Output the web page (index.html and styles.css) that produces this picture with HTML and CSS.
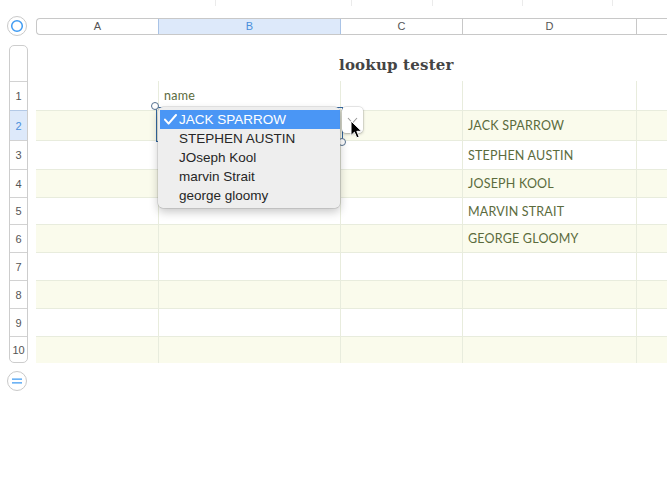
FILE: index.html
```html
<!DOCTYPE html>
<html>
<head>
<meta charset="utf-8">
<link rel="stylesheet" href="styles.css">
</head>
<body>
<div class="page">
  <div class="ghost">
    <span class="g g1"></span><span class="g g2"></span><span class="g g3"></span><span class="g g4"></span><span class="g g5"></span>
  </div>

  <div class="colbar">
    <div class="corner">
      <div class="roundbtn">
        <svg width="20" height="20" viewBox="0 0 20 20"><circle cx="10" cy="10" r="5.3" fill="none" stroke="#3f9bf2" stroke-width="1.5"/></svg>
      </div>
    </div>
    <div class="colheads">
      <div class="ch">A</div>
      <div class="ch sel">B</div>
      <div class="ch">C</div>
      <div class="ch">D</div>
      <div class="ch last"></div>
    </div>
  </div>

  <div class="sheet">
    <div class="gutter">
      <div class="rowheads">
        <div class="rh rh-title"></div>
        <div class="rh h29">1</div>
        <div class="rh h30 sel">2</div>
        <div class="rh h29">3</div>
        <div class="rh h28">4</div>
        <div class="rh h27">5</div>
        <div class="rh h28">6</div>
        <div class="rh h28">7</div>
        <div class="rh h28">8</div>
        <div class="rh h28">9</div>
        <div class="rh h26">10</div>
      </div>
      <div class="roundbtn bottom">
        <svg width="20" height="20" viewBox="0 0 20 20"><path d="M5 8.2h10M5 11.8h10" stroke="#3f9bf2" stroke-width="1.3" fill="none"/></svg>
      </div>
    </div>

    <div class="table">
      <div class="title-row"><span class="title">lookup tester</span></div>
      <div class="row h29 first">
        <div class="c"></div><div class="c"><span class="name">name</span></div><div class="c"></div><div class="c"></div><div class="c e"></div>
      </div>
      <div class="row h30 band">
        <div class="c"></div><div class="c"></div><div class="c"></div><div class="c val">JACK SPARROW</div><div class="c e"></div>
      </div>
      <div class="row h29">
        <div class="c"></div><div class="c"></div><div class="c"></div><div class="c val">STEPHEN AUSTIN</div><div class="c e"></div>
      </div>
      <div class="row h28 band">
        <div class="c"></div><div class="c"></div><div class="c"></div><div class="c val">JOSEPH KOOL</div><div class="c e"></div>
      </div>
      <div class="row h27">
        <div class="c"></div><div class="c"></div><div class="c"></div><div class="c val">MARVIN STRAIT</div><div class="c e"></div>
      </div>
      <div class="row h28 band">
        <div class="c"></div><div class="c"></div><div class="c"></div><div class="c val">GEORGE GLOOMY</div><div class="c e"></div>
      </div>
      <div class="row h28">
        <div class="c"></div><div class="c"></div><div class="c"></div><div class="c"></div><div class="c e"></div>
      </div>
      <div class="row h28 band">
        <div class="c"></div><div class="c"></div><div class="c"></div><div class="c"></div><div class="c e"></div>
      </div>
      <div class="row h28">
        <div class="c"></div><div class="c"></div><div class="c"></div><div class="c"></div><div class="c e"></div>
      </div>
      <div class="row h27 band">
        <div class="c"></div><div class="c"></div><div class="c"></div><div class="c"></div><div class="c e"></div>
      </div>
    </div>
  </div>

  <!-- overlays: selection, popup menu, popup button, cursor -->
  <div class="selbox"></div>
  <span class="handle h-tl"></span>
  <span class="handle h-br"></span>

  <div class="menu">
    <div class="item on">
      <svg class="check" width="13" height="11" viewBox="0 0 13 11"><path d="M1 5.6l3.6 4L12 1" fill="none" stroke="#fff" stroke-width="2" stroke-linecap="round" stroke-linejoin="round"/></svg>JACK SPARROW</div>
    <div class="item">STEPHEN AUSTIN</div>
    <div class="item">JOseph Kool</div>
    <div class="item">marvin Strait</div>
    <div class="item">george gloomy</div>
  </div>

  <div class="popbtn">
    <svg width="21" height="26" viewBox="0 0 21 26"><path d="M6 11l4.5 5 4.5-5" fill="none" stroke="#9a9a9a" stroke-width="1.1"/></svg>
  </div>

  <svg class="cursor" width="14" height="20" viewBox="0 0 14 20">
    <path d="M1 1v14.5l3.4-3.3 2.4 5.6 2.4-1-2.4-5.5h4.8z" fill="#000" stroke="#fff" stroke-width="1" stroke-linejoin="round"/>
  </svg>
</div>
</body>
</html>
```

FILE: styles.css
```css
* { box-sizing: border-box; }
html, body { margin: 0; padding: 0; background: #fff; }
body { font-family: "Liberation Sans", Arial, sans-serif; }

.page { position: relative; width: 667px; height: 500px; overflow: hidden; }

/* faint lines from a table above */
.ghost { height: 6px; position: relative; display: flex; padding-left: 215px; }
.g { display: block; height: 6px; border-left: 1px solid #ebebeb; }
.g1 { width: 136px; }
.g2 { width: 81px; }
.g3 { width: 90px; }
.g4 { width: 90px; }
.g5 { width: 10px; }

/* column header bar */
.colbar { display: flex; margin-top: 12px; height: 17px; }
.corner { width: 36px; position: relative; }
.roundbtn {
  width: 20px; height: 20px; border-radius: 50%;
  border: 1px solid #c9c9c9; background: #fff;
  display: flex; align-items: center; justify-content: center;
}
.corner .roundbtn { margin-top: -2px; margin-left: 7px; }
.roundbtn svg { display: block; flex: none; }

.colheads {
  flex: 1; display: grid;
  grid-template-columns: 122px 182px 122px 174px 1fr;
  border: 1px solid #c8c8c8; border-right: none;
  border-radius: 4px 0 0 4px; overflow: hidden;
}
.ch {
  font-size: 11px; color: #555; text-align: center; line-height: 15px;
  border-right: 1px solid #c8c8c8;
}
.ch.sel { background: #dde9fa; color: #4a8fdc; border-right-color: #a9c3e6; border-left: 1px solid #a9c3e6; margin-left: -1px; }
.ch.last { border-right: none; }

/* sheet */
.sheet { display: flex; margin-top: 10px; }
.gutter { width: 36px; padding-left: 9px; }
.rowheads {
  width: 19px; border: 1px solid #cdcdcd; border-radius: 5px;
  overflow: hidden;
}
.rh {
  font-size: 11px; color: #555; text-align: center;
  display: flex; align-items: center; justify-content: center;
  border-top: 1px solid #d2d2d2;
}
.rh-title { height: 35px; border-top: none; }
.rh.sel { background: #dde9fa; color: #4a8fdc; border-top-color: #b3c9e6; }
.roundbtn.bottom { margin-top: 8px; margin-left: -2px; }

.h26 { height: 26px; }
.h27 { height: 27px; }
.h28 { height: 28px; }
.h29 { height: 29px; }
.h30 { height: 30px; }

.table { width: 631px; }
.title-row { height: 36px; position: relative; }
.title {
  position: absolute; left: 303px; top: 11px;
  font-family: "DejaVu Serif", "Liberation Serif", serif;
  font-weight: bold; font-size: 15px; color: #444; letter-spacing: 0.2px;
}

.row {
  display: grid; grid-template-columns: 123px 182px 122px 174px 1fr;
  border-top: 1px solid #e8ecdd;
}
.row.first { border-top: none; }
.row.band { background: #fafbec; }
.c { border-right: 1px solid #e8ecdd; padding-left: 5px; display: flex; align-items: center; }
.c.e { border-right: none; }
.name { font-family: "Lato", sans-serif; font-size: 12.5px; color: #5b6b3d; letter-spacing: 0.3px; }
.val { font-family: "Lato", sans-serif; font-size: 12.5px; color: #5b6b3d; letter-spacing: 0.2px; }

/* overlays */
.selbox {
  position: absolute; left: 156px; top: 107px; width: 187px; height: 35px;
  border: 1.5px solid #33679f;
}
.handle {
  position: absolute; width: 8px; height: 8px; border-radius: 50%;
  background: #fff; border: 1.2px solid #56718f;
}
.h-tl { left: 151px; top: 102px; }
.h-br { left: 338px; top: 138px; }

.menu {
  position: absolute; left: 158px; top: 107px; width: 182px; height: 101px;
  background: #eeeeee; border-radius: 5px;
  box-shadow: 0 0 0 0.5px rgba(0,0,0,0.18), 0 4px 10px rgba(0,0,0,0.22);
  padding-top: 3px;
}
.item {
  position: relative; height: 19px; line-height: 19px;
  padding-left: 21px; font-size: 13.5px; color: #262626;
}
.item.on { background: #4a96f5; color: #fff; margin-left: 2px; padding-left: 19px; }
.check { position: absolute; left: 4px; top: 4px; display: block; }

.popbtn {
  position: absolute; left: 342px; top: 107px; width: 21px; height: 26px;
  background: #fff; border-radius: 4px;
  box-shadow: 0 0 0 0.5px rgba(0,0,0,0.15), 0 1px 3px rgba(0,0,0,0.25);
}
.popbtn svg { display: block; }
.cursor { position: absolute; left: 350px; top: 120px; }
```
